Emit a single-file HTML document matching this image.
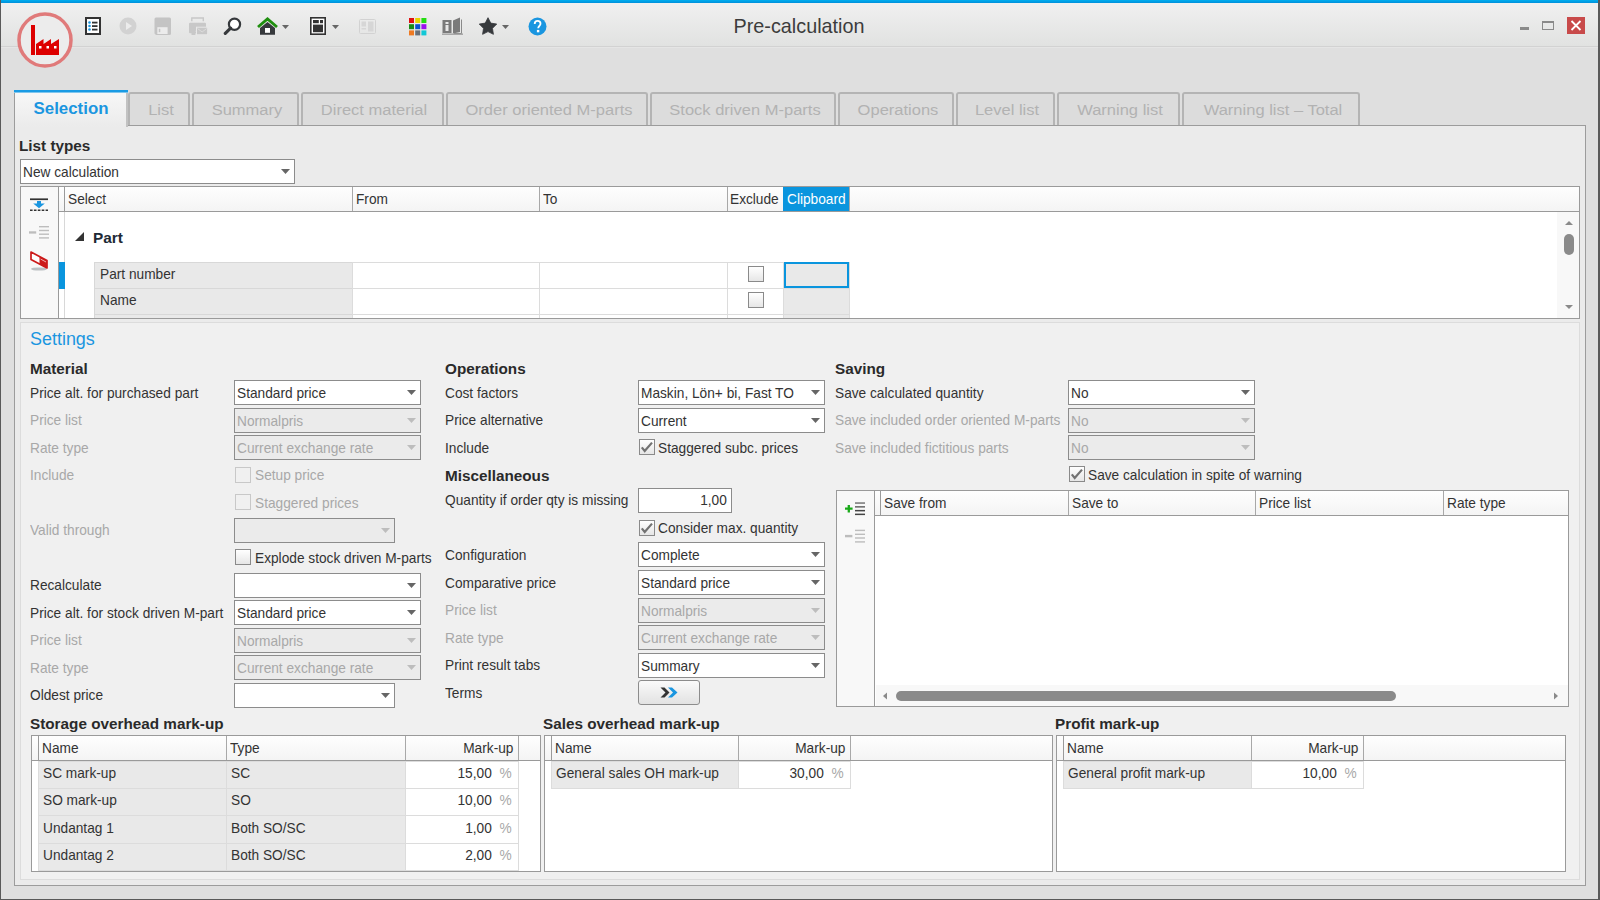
<!DOCTYPE html>
<html><head><meta charset="utf-8"><title>Pre-calculation</title>
<style>
html,body{margin:0;padding:0;width:1600px;height:900px;overflow:hidden;background:#dfdfdf}
body{position:relative;font-family:"Liberation Sans",sans-serif}
body>div{position:absolute}
.t{position:absolute;line-height:0;white-space:nowrap}
</style></head><body>
<div style="left:0;top:0;width:1600px;height:900px;background:#dfdfdf"></div>
<div style="left:0;top:3px;width:1600px;height:43px;background:linear-gradient(#f0f0f0,#e1e2e1)"></div>
<div style="left:0px;top:46px;width:1600px;height:1px;background:#d2d2d2"></div>
<div style="left:0px;top:47px;width:1600px;height:1px;background:#e5e5e5"></div>
<div style="left:0;top:0;width:1600px;height:3px;background:linear-gradient(#00aef0,#0090da)"></div>
<div style="left:0px;top:0px;width:1px;height:900px;background:#5a5a5a"></div>
<div style="left:1598px;top:0px;width:2px;height:900px;background:#5a5a5a"></div>
<div style="left:0px;top:899px;width:1600px;height:1px;background:#5a5a5a"></div>
<svg style="position:absolute;left:14px;top:10px" width="62" height="62" viewBox="0 0 62 62"><circle cx="31" cy="30" r="26" fill="#ececec" stroke="#e07a7a" stroke-width="3.5"/><rect x="17" y="15" width="4" height="30" fill="#dd0000"/><path d="M22 45V34L29.5 29V34L37 29V34L45 29V45Z" fill="#dd0000"/><rect x="25" y="36" width="2.5" height="2.5" fill="#fff"/><rect x="32.5" y="36" width="2.5" height="2.5" fill="#fff"/><rect x="40" y="36" width="2.5" height="2.5" fill="#fff"/></svg>
<svg style="position:absolute;left:85px;top:17px" width="16" height="18" viewBox="0 0 16 18"><rect x="1" y="1" width="14" height="16" fill="#fff" stroke="#333" stroke-width="2"/><circle cx="4.5" cy="5.5" r="1.3" fill="#1a96e0"/><circle cx="4.5" cy="9" r="1.3" fill="#1a96e0"/><circle cx="4.5" cy="12.5" r="1.3" fill="#1a96e0"/><rect x="7" y="4.7" width="5.5" height="1.8" fill="#333"/><rect x="7" y="8.2" width="5.5" height="1.8" fill="#333"/><rect x="7" y="11.7" width="5.5" height="1.8" fill="#333"/></svg>
<svg style="position:absolute;left:119px;top:17px" width="18" height="18" viewBox="0 0 18 18"><circle cx="9" cy="9" r="8.5" fill="#d2d2d2"/><path d="M7 5V13L13 9Z" fill="#ececec"/></svg>
<svg style="position:absolute;left:154px;top:17px" width="18" height="18" viewBox="0 0 18 18"><path d="M2 0.5H15.5A1.5 1.5 0 0 1 17 2V16.5A1.5 1.5 0 0 1 15.5 18H2L0.5 16.5V2A1.5 1.5 0 0 1 2 0.5Z" fill="#c4c4c4"/><rect x="3.3" y="10.2" width="10.3" height="6.8" fill="#ececec"/><rect x="4.8" y="11.8" width="1.5" height="3.4" fill="#c4c4c4"/></svg>
<svg style="position:absolute;left:189px;top:17px" width="19" height="18" viewBox="0 0 19 18"><path d="M2.8 4.3V1H14.3V4.3" stroke="#c8c8c8" stroke-width="1.4" fill="none"/><rect x="0" y="5.7" width="17" height="10.5" rx="1" fill="#c8c8c8"/><rect x="2.5" y="15" width="4" height="3" fill="#c8c8c8"/><rect x="6.6" y="16.8" width="0.9" height="0.9" fill="#e6e6e6"/><rect x="6.6" y="13.8" width="0.9" height="0.9" fill="#e6e6e6"/><rect x="7.5" y="10.2" width="11.2" height="7.6" fill="#c8c8c8" stroke="#e8e8e8" stroke-width="1"/><path d="M8.5 11.5L13.1 15L17.7 11.5" stroke="#dcdcdc" stroke-width="1" fill="none"/></svg>
<svg style="position:absolute;left:223px;top:16px" width="19" height="19" viewBox="0 0 19 19"><circle cx="11.5" cy="8.2" r="5.6" fill="#fff" stroke="#36393c" stroke-width="2.2"/><path d="M7.6 12.2L2.3 17.3" stroke="#36393c" stroke-width="3.2" stroke-linecap="round"/></svg>
<svg style="position:absolute;left:256px;top:16px" width="23" height="20" viewBox="0 0 23 20"><path d="M4 18.8V12L11.5 6L19 12V18.8Z" fill="#36393c"/><path d="M2 11L11.5 3L21 11" stroke="#1f8f0f" stroke-width="2.9" fill="none" stroke-linejoin="miter"/><rect x="9" y="12" width="5" height="4.8" fill="#fff"/></svg>
<svg style="position:absolute;left:282px;top:24.5px" width="7" height="4" viewBox="0 0 7 4"><path d="M0 0H7L3.5 4Z" fill="#666"/></svg>
<svg style="position:absolute;left:310px;top:17px" width="16" height="18" viewBox="0 0 16 18"><rect x="0.8" y="0.8" width="14.4" height="16.4" fill="#fff" stroke="#333" stroke-width="1.6"/><rect x="3" y="3" width="5.8" height="3.2" fill="#333"/><rect x="10" y="3" width="3" height="3.2" fill="#333"/><rect x="3" y="7.6" width="10" height="7.6" fill="#333"/></svg>
<svg style="position:absolute;left:332px;top:24.5px" width="7" height="4" viewBox="0 0 7 4"><path d="M0 0H7L3.5 4Z" fill="#666"/></svg>
<svg style="position:absolute;left:359px;top:19px" width="17" height="15" viewBox="0 0 17 15"><rect x="0.5" y="0.5" width="16" height="14" rx="1" fill="none" stroke="#d2d2d2"/><rect x="2.5" y="2.5" width="4.5" height="5" fill="#d6d6d6"/><rect x="9" y="2.5" width="5.5" height="10" fill="#d6d6d6"/><rect x="2.5" y="9" width="4.5" height="1.5" fill="#d6d6d6"/></svg>
<svg style="position:absolute;left:408.5px;top:17.5px" width="18" height="18" viewBox="0 0 18 18"><rect x="0.0" y="0.0" width="5" height="5" fill="#e01010"/><rect x="6.2" y="0.0" width="5" height="5" fill="#e6d400"/><rect x="12.4" y="0.0" width="5" height="5" fill="#22dd11"/><rect x="0.0" y="6.2" width="5" height="5" fill="#168a16"/><rect x="6.2" y="6.2" width="5" height="5" fill="#0a50d0"/><rect x="12.4" y="6.2" width="5" height="5" fill="#9a10ee"/><rect x="0.0" y="12.4" width="5" height="5" fill="#ee7a22"/><rect x="6.2" y="12.4" width="5" height="5" fill="#67707a"/><rect x="12.4" y="12.4" width="5" height="5" fill="#12c8d6"/></svg>
<svg style="position:absolute;left:442px;top:17px" width="22" height="18" viewBox="0 0 22 18"><rect x="0.5" y="3" width="9" height="13" fill="#7a7a7a"/><rect x="3.5" y="5" width="3" height="2" fill="#e8e8e8"/><rect x="3.5" y="8" width="3" height="6" fill="#e8e8e8"/><path d="M11 3.5L18 0.5V15L11 16.5Z" fill="#7a7a7a"/><path d="M19.5 2.5V16.5H12" stroke="#8a8a8a" stroke-width="1" fill="none"/><rect x="0" y="16.5" width="21" height="1.3" fill="#9a9a9a"/></svg>
<svg style="position:absolute;left:478.5px;top:16.5px" width="18" height="19" viewBox="0 0 18 19"><path d="M9.00 0.70L11.76 6.10L17.75 7.06L13.47 11.35L14.41 17.34L9.00 14.60L3.59 17.34L4.53 11.35L0.25 7.06L6.24 6.10Z" fill="#36393c" stroke="#36393c" stroke-width="0.8" stroke-linejoin="round"/></svg>
<svg style="position:absolute;left:502px;top:24.5px" width="7" height="4" viewBox="0 0 7 4"><path d="M0 0H7L3.5 4Z" fill="#666"/></svg>
<svg style="position:absolute;left:528px;top:17px" width="19" height="19" viewBox="0 0 19 19"><circle cx="9.5" cy="9.5" r="9" fill="#1a96e0"/><path d="M6.7 7C6.7 5.2 7.9 3.9 9.6 3.9C11.3 3.9 12.5 5.1 12.5 6.7C12.5 8.7 10.2 9 10.2 11.3" stroke="#fff" stroke-width="1.8" fill="none"/><rect x="8.9" y="12.9" width="2.4" height="2.4" fill="#fff"/></svg>
<div class="t" style="left:598.5px;width:400px;text-align:center;top:26.30px;font-size:20.2px;color:#3c3c3c;font-weight:normal;transform:scaleX(0.9800);transform-origin:50% 0;">Pre-calculation</div>
<div style="left:1520px;top:27px;width:9px;height:3px;background:#8a8a8a"></div>
<div style="left:1542px;top:21px;width:12px;height:9px;border:1px solid #8a8a8a;border-top-width:2px;box-sizing:border-box"></div>
<div style="left:1567px;top:17px;width:18px;height:17px;background:#c84a4a"></div>
<svg style="position:absolute;left:1567px;top:17px" width="18" height="17" viewBox="0 0 18 17"><path d="M4.5 4L13.5 13M13.5 4L4.5 13" stroke="#fff" stroke-width="1.8"/></svg>
<div style="left:128px;top:92px;width:62px;height:34px;background:#dcdcdc;border:2px solid #b4b4b4;border-bottom:none;box-sizing:border-box;border-radius:3px 3px 0 0"></div>
<div class="t" style="left:-39.30000000000001px;width:400px;text-align:center;top:110.33px;font-size:15.2px;color:#b2b2b2;font-weight:normal;transform:scaleX(1.0870);transform-origin:50% 0;">List</div>
<div style="left:192px;top:92px;width:107px;height:34px;background:#dcdcdc;border:2px solid #b4b4b4;border-bottom:none;box-sizing:border-box;border-radius:3px 3px 0 0"></div>
<div class="t" style="left:47.19999999999999px;width:400px;text-align:center;top:110.33px;font-size:15.2px;color:#b2b2b2;font-weight:normal;transform:scaleX(1.0870);transform-origin:50% 0;">Summary</div>
<div style="left:301px;top:92px;width:143px;height:34px;background:#dcdcdc;border:2px solid #b4b4b4;border-bottom:none;box-sizing:border-box;border-radius:3px 3px 0 0"></div>
<div class="t" style="left:174.2px;width:400px;text-align:center;top:110.33px;font-size:15.2px;color:#b2b2b2;font-weight:normal;transform:scaleX(1.0870);transform-origin:50% 0;">Direct material</div>
<div style="left:446px;top:92px;width:202px;height:34px;background:#dcdcdc;border:2px solid #b4b4b4;border-bottom:none;box-sizing:border-box;border-radius:3px 3px 0 0"></div>
<div class="t" style="left:348.70000000000005px;width:400px;text-align:center;top:110.33px;font-size:15.2px;color:#b2b2b2;font-weight:normal;transform:scaleX(1.0870);transform-origin:50% 0;">Order oriented M-parts</div>
<div style="left:650px;top:92px;width:186px;height:34px;background:#dcdcdc;border:2px solid #b4b4b4;border-bottom:none;box-sizing:border-box;border-radius:3px 3px 0 0"></div>
<div class="t" style="left:544.7px;width:400px;text-align:center;top:110.33px;font-size:15.2px;color:#b2b2b2;font-weight:normal;transform:scaleX(1.0870);transform-origin:50% 0;">Stock driven M-parts</div>
<div style="left:838px;top:92px;width:116px;height:34px;background:#dcdcdc;border:2px solid #b4b4b4;border-bottom:none;box-sizing:border-box;border-radius:3px 3px 0 0"></div>
<div class="t" style="left:697.7px;width:400px;text-align:center;top:110.33px;font-size:15.2px;color:#b2b2b2;font-weight:normal;transform:scaleX(1.0870);transform-origin:50% 0;">Operations</div>
<div style="left:956px;top:92px;width:99px;height:34px;background:#dcdcdc;border:2px solid #b4b4b4;border-bottom:none;box-sizing:border-box;border-radius:3px 3px 0 0"></div>
<div class="t" style="left:807.2px;width:400px;text-align:center;top:110.33px;font-size:15.2px;color:#b2b2b2;font-weight:normal;transform:scaleX(1.0870);transform-origin:50% 0;">Level list</div>
<div style="left:1057px;top:92px;width:123px;height:34px;background:#dcdcdc;border:2px solid #b4b4b4;border-bottom:none;box-sizing:border-box;border-radius:3px 3px 0 0"></div>
<div class="t" style="left:920.2px;width:400px;text-align:center;top:110.33px;font-size:15.2px;color:#b2b2b2;font-weight:normal;transform:scaleX(1.0870);transform-origin:50% 0;">Warning list</div>
<div style="left:1182px;top:92px;width:178px;height:34px;background:#dcdcdc;border:2px solid #b4b4b4;border-bottom:none;box-sizing:border-box;border-radius:3px 3px 0 0"></div>
<div class="t" style="left:1072.7px;width:400px;text-align:center;top:110.33px;font-size:15.2px;color:#b2b2b2;font-weight:normal;transform:scaleX(1.0870);transform-origin:50% 0;">Warning list – Total</div>
<div style="left:14px;top:125px;width:1572px;height:761px;background:#ebebeb;border:1px solid #9c9c9c;box-sizing:border-box"></div>
<div style="left:14px;top:90px;width:114px;height:37px;background:linear-gradient(#f8f8f8,#ebebeb);border-left:1px solid #9c9c9c;border-right:2px solid #c2c2c2;box-sizing:border-box"></div>
<div style="left:14px;top:90px;width:114px;height:2px;background:#1a9be4"></div>
<div style="left:14px;top:92px;width:114px;height:1px;background:#7fc6ee"></div>
<div class="t" style="left:-129px;width:400px;text-align:center;top:109.36px;font-size:15.7px;color:#1a96e0;font-weight:bold;transform:scaleX(1.0750);transform-origin:50% 0;">Selection</div>
<div class="t" style="left:19.2px;top:146.48px;font-size:13.9px;color:#2a2a2a;font-weight:bold;transform:scaleX(1.1000);transform-origin:0 0;">List types</div>
<div style="left:20px;top:159px;width:275px;height:25px;border:1px solid #8c8c8c;box-sizing:border-box;background:#fff"></div>
<div class="t" style="left:23.2px;top:171.55px;font-size:14.3px;color:#333;font-weight:normal;transform:scaleX(0.9580);transform-origin:0 0;">New calculation</div>
<svg style="position:absolute;left:281px;top:169px" width="9" height="5" viewBox="0 0 9 5"><path d="M0 0H9L4.5 5Z" fill="#666"/></svg>
<div style="left:20px;top:186px;width:1560px;height:133px;background:#fff;border:1px solid #9a9a9a;box-sizing:border-box"></div>
<div style="left:21px;top:187px;width:38px;height:131px;background:#f8f8f8;border-right:1px solid #9a9a9a;box-sizing:border-box"></div>
<div style="left:59px;top:187px;width:1520px;height:25px;background:linear-gradient(#fefefe,#f4f4f4);border-bottom:1px solid #9a9a9a;box-sizing:border-box"></div>
<div style="left:64px;top:187px;width:1px;height:25px;background:#9a9a9a"></div>
<div style="left:64px;top:212px;width:1px;height:106px;background:#d8d8d8"></div>
<div style="left:352px;top:187px;width:1px;height:24px;background:#a8a8a8"></div>
<div style="left:539px;top:187px;width:1px;height:24px;background:#a8a8a8"></div>
<div style="left:727px;top:187px;width:1px;height:24px;background:#a8a8a8"></div>
<div style="left:849px;top:187px;width:1px;height:24px;background:#a8a8a8"></div>
<div style="left:783px;top:187px;width:66px;height:24px;background:#0a95de"></div>
<div class="t" style="left:68.2px;top:198.85px;font-size:14.3px;color:#333;font-weight:normal;transform:scaleX(0.9580);transform-origin:0 0;">Select</div>
<div class="t" style="left:355.7px;top:198.85px;font-size:14.3px;color:#333;font-weight:normal;transform:scaleX(0.9580);transform-origin:0 0;">From</div>
<div class="t" style="left:543.2px;top:198.85px;font-size:14.3px;color:#333;font-weight:normal;transform:scaleX(0.9580);transform-origin:0 0;">To</div>
<div class="t" style="left:730.2px;top:198.85px;font-size:14.3px;color:#333;font-weight:normal;transform:scaleX(0.9580);transform-origin:0 0;">Exclude</div>
<div class="t" style="left:787.2px;top:198.85px;font-size:14.3px;color:#fff;font-weight:normal;transform:scaleX(0.9580);transform-origin:0 0;">Clipboard</div>
<svg style="position:absolute;left:29px;top:198px" width="20" height="14" viewBox="0 0 20 14"><rect x="1" y="0.4" width="18" height="1.7" fill="#333"/><path d="M8 3H12V5.5H15.8L10 10.3L4.2 5.5H8Z" fill="#1a96e0"/><path d="M1 12.3H19" stroke="#333" stroke-width="1.6" stroke-dasharray="2.6 1.3"/></svg>
<svg style="position:absolute;left:28px;top:225px" width="22" height="15" viewBox="0 0 22 15"><rect x="1" y="6.3" width="7.2" height="2.3" fill="#bdbdbd"/><rect x="11" y="1" width="10" height="1.4" fill="#bdbdbd"/><rect x="11" y="4.8" width="10" height="1.4" fill="#bdbdbd"/><rect x="11" y="8.5" width="10" height="1.4" fill="#bdbdbd"/><rect x="11" y="12.2" width="10" height="1.4" fill="#bdbdbd"/></svg>
<svg style="position:absolute;left:28px;top:249px" width="22" height="23" viewBox="0 0 22 23"><ellipse cx="11" cy="20" rx="8" ry="1.6" fill="#8a9298" opacity="0.55"/><path d="M3 3L19 11.5V19L3 10.5Z" fill="#fff" stroke="#cc1a1a" stroke-width="1.7" stroke-linejoin="round"/><path d="M11.5 7.5L19 11.5V19L11.5 15Z" fill="#cc1a1a"/><path d="M12.5 10L18 13" stroke="#f0b0b0" stroke-width="1"/></svg>
<svg style="position:absolute;left:75px;top:232px" width="9" height="9" viewBox="0 0 9 9"><path d="M9 0V9H0Z" fill="#333"/></svg>
<div class="t" style="left:92.7px;top:237.75px;font-size:14px;color:#1e2a36;font-weight:bold;transform:scaleX(1.1000);transform-origin:0 0;">Part</div>
<div style="left:59px;top:262px;width:6px;height:27px;background:#0a95de"></div>
<div style="left:94px;top:262px;width:259px;height:27px;background:#e9e9e9;border:1px solid #d8d8d8;border-right:none;box-sizing:border-box"></div>
<div style="left:352px;top:262px;width:188px;height:27px;background:#fff;border:1px solid #dcdcdc;border-right:none;box-sizing:border-box"></div>
<div style="left:539px;top:262px;width:189px;height:27px;background:#fff;border:1px solid #dcdcdc;border-right:none;box-sizing:border-box"></div>
<div style="left:727px;top:262px;width:57px;height:27px;background:#fff;border:1px solid #dcdcdc;border-right:none;box-sizing:border-box"></div>
<div style="left:783px;top:262px;width:67px;height:27px;background:#e9e9e9;border:1px solid #dcdcdc;box-sizing:border-box"></div>
<div class="t" style="left:99.7px;top:273.85px;font-size:14.3px;color:#333;font-weight:normal;transform:scaleX(0.9580);transform-origin:0 0;">Part number</div>
<div style="left:748px;top:266px;width:16px;height:16px;border:1px solid #8a8a8a;box-sizing:border-box;background:linear-gradient(#fff,#e6e6e6)"></div>
<div style="left:94px;top:288px;width:259px;height:27px;background:#e9e9e9;border:1px solid #d8d8d8;border-right:none;box-sizing:border-box"></div>
<div style="left:352px;top:288px;width:188px;height:27px;background:#fff;border:1px solid #dcdcdc;border-right:none;box-sizing:border-box"></div>
<div style="left:539px;top:288px;width:189px;height:27px;background:#fff;border:1px solid #dcdcdc;border-right:none;box-sizing:border-box"></div>
<div style="left:727px;top:288px;width:57px;height:27px;background:#fff;border:1px solid #dcdcdc;border-right:none;box-sizing:border-box"></div>
<div style="left:783px;top:288px;width:67px;height:27px;background:#e9e9e9;border:1px solid #dcdcdc;box-sizing:border-box"></div>
<div class="t" style="left:99.7px;top:299.85px;font-size:14.3px;color:#333;font-weight:normal;transform:scaleX(0.9580);transform-origin:0 0;">Name</div>
<div style="left:748px;top:292px;width:16px;height:16px;border:1px solid #8a8a8a;box-sizing:border-box;background:linear-gradient(#fff,#e6e6e6)"></div>
<div style="left:94px;top:314px;width:259px;height:5px;background:#e9e9e9;border:1px solid #d8d8d8;border-right:none;box-sizing:border-box"></div>
<div style="left:352px;top:314px;width:188px;height:5px;background:#fff;border:1px solid #dcdcdc;border-right:none;box-sizing:border-box"></div>
<div style="left:539px;top:314px;width:189px;height:5px;background:#fff;border:1px solid #dcdcdc;border-right:none;box-sizing:border-box"></div>
<div style="left:727px;top:314px;width:57px;height:5px;background:#fff;border:1px solid #dcdcdc;border-right:none;box-sizing:border-box"></div>
<div style="left:783px;top:314px;width:67px;height:5px;background:#e9e9e9;border:1px solid #dcdcdc;box-sizing:border-box"></div>
<div style="left:784px;top:262px;width:65px;height:26px;border:2px solid #0a95de;box-sizing:border-box"></div>
<div style="left:20px;top:318px;width:1560px;height:1px;background:#9a9a9a"></div>
<div style="left:1557px;top:212px;width:22px;height:106px;background:#f8f8f8"></div>
<svg style="position:absolute;left:1564px;top:220px" width="10" height="6" viewBox="0 0 10 6"><path d="M1 5H9L5 1Z" fill="#8a8a8a"/></svg>
<div style="left:1564px;top:234px;width:10px;height:21px;background:#8a8a8a;border-radius:5px"></div>
<svg style="position:absolute;left:1564px;top:304px" width="10" height="6" viewBox="0 0 10 6"><path d="M1 1H9L5 5Z" fill="#8a8a8a"/></svg>
<div style="left:20px;top:322px;width:1560px;height:558px;background:#f0f0f0;border:1px solid #dcdcdc;box-sizing:border-box"></div>
<div class="t" style="left:29.7px;top:338.52px;font-size:18.7px;color:#1a96e0;font-weight:normal;transform:scaleX(0.9600);transform-origin:0 0;">Settings</div>
<div class="t" style="left:30.2px;top:368.98px;font-size:13.9px;color:#2a2a2a;font-weight:bold;transform:scaleX(1.1000);transform-origin:0 0;">Material</div>
<div class="t" style="left:30.2px;top:393.05px;font-size:14.3px;color:#333;font-weight:normal;transform:scaleX(0.9580);transform-origin:0 0;">Price alt. for purchased part</div>
<div style="left:234px;top:380px;width:187px;height:25px;border:1px solid #8c8c8c;box-sizing:border-box;background:#fff"></div>
<div class="t" style="left:237.2px;top:392.55px;font-size:14.3px;color:#333;font-weight:normal;transform:scaleX(0.9580);transform-origin:0 0;">Standard price</div>
<svg style="position:absolute;left:407px;top:390px" width="9" height="5" viewBox="0 0 9 5"><path d="M0 0H9L4.5 5Z" fill="#666"/></svg>
<div class="t" style="left:30.2px;top:420.05px;font-size:14.3px;color:#a8a8a8;font-weight:normal;transform:scaleX(0.9580);transform-origin:0 0;">Price list</div>
<div style="left:234px;top:408px;width:187px;height:25px;border:1px solid #8c8c8c;box-sizing:border-box;background:#ebebeb"></div>
<div class="t" style="left:237.2px;top:420.55px;font-size:14.3px;color:#a8a8a8;font-weight:normal;transform:scaleX(0.9580);transform-origin:0 0;">Normalpris</div>
<svg style="position:absolute;left:407px;top:418px" width="9" height="5" viewBox="0 0 9 5"><path d="M0 0H9L4.5 5Z" fill="#bdbdbd"/></svg>
<div class="t" style="left:30.2px;top:448.05px;font-size:14.3px;color:#a8a8a8;font-weight:normal;transform:scaleX(0.9580);transform-origin:0 0;">Rate type</div>
<div style="left:234px;top:435px;width:187px;height:25px;border:1px solid #8c8c8c;box-sizing:border-box;background:#ebebeb"></div>
<div class="t" style="left:237.2px;top:447.55px;font-size:14.3px;color:#a8a8a8;font-weight:normal;transform:scaleX(0.9580);transform-origin:0 0;">Current exchange rate</div>
<svg style="position:absolute;left:407px;top:445px" width="9" height="5" viewBox="0 0 9 5"><path d="M0 0H9L4.5 5Z" fill="#bdbdbd"/></svg>
<div class="t" style="left:30.2px;top:475.05px;font-size:14.3px;color:#a8a8a8;font-weight:normal;transform:scaleX(0.9580);transform-origin:0 0;">Include</div>
<div style="left:235px;top:467px;width:16px;height:16px;border:1px solid #c8c8c8;box-sizing:border-box;background:transparent"></div>
<div class="t" style="left:254.7px;top:475.05px;font-size:14.3px;color:#a8a8a8;font-weight:normal;transform:scaleX(0.9580);transform-origin:0 0;">Setup price</div>
<div style="left:235px;top:494px;width:16px;height:16px;border:1px solid #c8c8c8;box-sizing:border-box;background:transparent"></div>
<div class="t" style="left:254.7px;top:503.05px;font-size:14.3px;color:#a8a8a8;font-weight:normal;transform:scaleX(0.9580);transform-origin:0 0;">Staggered prices</div>
<div class="t" style="left:30.2px;top:530.05px;font-size:14.3px;color:#a8a8a8;font-weight:normal;transform:scaleX(0.9580);transform-origin:0 0;">Valid through</div>
<div style="left:234px;top:518px;width:161px;height:25px;border:1px solid #8c8c8c;box-sizing:border-box;background:#ebebeb"></div>
<svg style="position:absolute;left:381px;top:528px" width="9" height="5" viewBox="0 0 9 5"><path d="M0 0H9L4.5 5Z" fill="#bdbdbd"/></svg>
<div style="left:235px;top:549px;width:16px;height:16px;border:1px solid #8a8a8a;box-sizing:border-box;background:linear-gradient(#fff,#e6e6e6)"></div>
<div class="t" style="left:254.7px;top:558.05px;font-size:14.3px;color:#333;font-weight:normal;transform:scaleX(0.9580);transform-origin:0 0;">Explode stock driven M-parts</div>
<div class="t" style="left:30.2px;top:585.05px;font-size:14.3px;color:#333;font-weight:normal;transform:scaleX(0.9580);transform-origin:0 0;">Recalculate</div>
<div style="left:234px;top:573px;width:187px;height:25px;border:1px solid #8c8c8c;box-sizing:border-box;background:#fff"></div>
<svg style="position:absolute;left:407px;top:583px" width="9" height="5" viewBox="0 0 9 5"><path d="M0 0H9L4.5 5Z" fill="#666"/></svg>
<div class="t" style="left:30.2px;top:613.05px;font-size:14.3px;color:#333;font-weight:normal;transform:scaleX(0.9580);transform-origin:0 0;">Price alt. for stock driven M-part</div>
<div style="left:234px;top:600px;width:187px;height:25px;border:1px solid #8c8c8c;box-sizing:border-box;background:#fff"></div>
<div class="t" style="left:237.2px;top:612.55px;font-size:14.3px;color:#333;font-weight:normal;transform:scaleX(0.9580);transform-origin:0 0;">Standard price</div>
<svg style="position:absolute;left:407px;top:610px" width="9" height="5" viewBox="0 0 9 5"><path d="M0 0H9L4.5 5Z" fill="#666"/></svg>
<div class="t" style="left:30.2px;top:640.05px;font-size:14.3px;color:#a8a8a8;font-weight:normal;transform:scaleX(0.9580);transform-origin:0 0;">Price list</div>
<div style="left:234px;top:628px;width:187px;height:25px;border:1px solid #8c8c8c;box-sizing:border-box;background:#ebebeb"></div>
<div class="t" style="left:237.2px;top:640.55px;font-size:14.3px;color:#a8a8a8;font-weight:normal;transform:scaleX(0.9580);transform-origin:0 0;">Normalpris</div>
<svg style="position:absolute;left:407px;top:638px" width="9" height="5" viewBox="0 0 9 5"><path d="M0 0H9L4.5 5Z" fill="#bdbdbd"/></svg>
<div class="t" style="left:30.2px;top:668.05px;font-size:14.3px;color:#a8a8a8;font-weight:normal;transform:scaleX(0.9580);transform-origin:0 0;">Rate type</div>
<div style="left:234px;top:655px;width:187px;height:25px;border:1px solid #8c8c8c;box-sizing:border-box;background:#ebebeb"></div>
<div class="t" style="left:237.2px;top:667.55px;font-size:14.3px;color:#a8a8a8;font-weight:normal;transform:scaleX(0.9580);transform-origin:0 0;">Current exchange rate</div>
<svg style="position:absolute;left:407px;top:665px" width="9" height="5" viewBox="0 0 9 5"><path d="M0 0H9L4.5 5Z" fill="#bdbdbd"/></svg>
<div class="t" style="left:30.2px;top:695.05px;font-size:14.3px;color:#333;font-weight:normal;transform:scaleX(0.9580);transform-origin:0 0;">Oldest price</div>
<div style="left:234px;top:683px;width:161px;height:25px;border:1px solid #8c8c8c;box-sizing:border-box;background:#fff"></div>
<svg style="position:absolute;left:381px;top:693px" width="9" height="5" viewBox="0 0 9 5"><path d="M0 0H9L4.5 5Z" fill="#666"/></svg>
<div class="t" style="left:445.2px;top:368.98px;font-size:13.9px;color:#2a2a2a;font-weight:bold;transform:scaleX(1.1000);transform-origin:0 0;">Operations</div>
<div class="t" style="left:445.2px;top:392.85px;font-size:14.3px;color:#333;font-weight:normal;transform:scaleX(0.9580);transform-origin:0 0;">Cost factors</div>
<div style="left:638px;top:380px;width:187px;height:25px;border:1px solid #8c8c8c;box-sizing:border-box;background:#fff"></div>
<div class="t" style="left:641.2px;top:392.55px;font-size:14.3px;color:#333;font-weight:normal;transform:scaleX(0.9580);transform-origin:0 0;">Maskin, Lön+ bi, Fast TO</div>
<svg style="position:absolute;left:811px;top:390px" width="9" height="5" viewBox="0 0 9 5"><path d="M0 0H9L4.5 5Z" fill="#666"/></svg>
<div class="t" style="left:445.2px;top:420.35px;font-size:14.3px;color:#333;font-weight:normal;transform:scaleX(0.9580);transform-origin:0 0;">Price alternative</div>
<div style="left:638px;top:408px;width:187px;height:25px;border:1px solid #8c8c8c;box-sizing:border-box;background:#fff"></div>
<div class="t" style="left:641.2px;top:420.55px;font-size:14.3px;color:#333;font-weight:normal;transform:scaleX(0.9580);transform-origin:0 0;">Current</div>
<svg style="position:absolute;left:811px;top:418px" width="9" height="5" viewBox="0 0 9 5"><path d="M0 0H9L4.5 5Z" fill="#666"/></svg>
<div class="t" style="left:445.2px;top:447.65px;font-size:14.3px;color:#333;font-weight:normal;transform:scaleX(0.9580);transform-origin:0 0;">Include</div>
<div style="left:639px;top:439px;width:16px;height:16px;border:1px solid #8a8a8a;box-sizing:border-box;background:linear-gradient(#fff,#e6e6e6)"></div>
<svg style="position:absolute;left:639px;top:439px" width="16" height="16" viewBox="0 0 16 16"><path d="M2.8 8.4L5.7 12L13 3.6" stroke="#727272" stroke-width="2.2" fill="none"/></svg>
<div class="t" style="left:658.2px;top:447.65px;font-size:14.3px;color:#333;font-weight:normal;transform:scaleX(0.9580);transform-origin:0 0;">Staggered subc. prices</div>
<div class="t" style="left:445.2px;top:476.48px;font-size:13.9px;color:#2a2a2a;font-weight:bold;transform:scaleX(1.1000);transform-origin:0 0;">Miscellaneous</div>
<div class="t" style="left:445.2px;top:500.45px;font-size:14.3px;color:#333;font-weight:normal;transform:scaleX(0.9580);transform-origin:0 0;">Quantity if order qty is missing</div>
<div style="left:638px;top:488px;width:94px;height:25px;border:1px solid #8c8c8c;box-sizing:border-box;background:#fff"></div>
<div class="t" style="right:873px;top:500.45px;font-size:14.3px;color:#333;font-weight:normal;transform:scaleX(0.9580);transform-origin:100% 0;">1,00</div>
<div style="left:639px;top:519.5px;width:16px;height:16px;border:1px solid #8a8a8a;box-sizing:border-box;background:linear-gradient(#fff,#e6e6e6)"></div>
<svg style="position:absolute;left:639px;top:519.5px" width="16" height="16" viewBox="0 0 16 16"><path d="M2.8 8.4L5.7 12L13 3.6" stroke="#727272" stroke-width="2.2" fill="none"/></svg>
<div class="t" style="left:658.2px;top:528.05px;font-size:14.3px;color:#333;font-weight:normal;transform:scaleX(0.9580);transform-origin:0 0;">Consider max. quantity</div>
<div class="t" style="left:445.2px;top:555.05px;font-size:14.3px;color:#333;font-weight:normal;transform:scaleX(0.9580);transform-origin:0 0;">Configuration</div>
<div style="left:638px;top:542px;width:187px;height:25px;border:1px solid #8c8c8c;box-sizing:border-box;background:#fff"></div>
<div class="t" style="left:641.2px;top:554.55px;font-size:14.3px;color:#333;font-weight:normal;transform:scaleX(0.9580);transform-origin:0 0;">Complete</div>
<svg style="position:absolute;left:811px;top:552px" width="9" height="5" viewBox="0 0 9 5"><path d="M0 0H9L4.5 5Z" fill="#666"/></svg>
<div class="t" style="left:445.2px;top:583.05px;font-size:14.3px;color:#333;font-weight:normal;transform:scaleX(0.9580);transform-origin:0 0;">Comparative price</div>
<div style="left:638px;top:570px;width:187px;height:25px;border:1px solid #8c8c8c;box-sizing:border-box;background:#fff"></div>
<div class="t" style="left:641.2px;top:582.55px;font-size:14.3px;color:#333;font-weight:normal;transform:scaleX(0.9580);transform-origin:0 0;">Standard price</div>
<svg style="position:absolute;left:811px;top:580px" width="9" height="5" viewBox="0 0 9 5"><path d="M0 0H9L4.5 5Z" fill="#666"/></svg>
<div class="t" style="left:445.2px;top:610.05px;font-size:14.3px;color:#a8a8a8;font-weight:normal;transform:scaleX(0.9580);transform-origin:0 0;">Price list</div>
<div style="left:638px;top:598px;width:187px;height:25px;border:1px solid #8c8c8c;box-sizing:border-box;background:#ebebeb"></div>
<div class="t" style="left:641.2px;top:610.55px;font-size:14.3px;color:#a8a8a8;font-weight:normal;transform:scaleX(0.9580);transform-origin:0 0;">Normalpris</div>
<svg style="position:absolute;left:811px;top:608px" width="9" height="5" viewBox="0 0 9 5"><path d="M0 0H9L4.5 5Z" fill="#bdbdbd"/></svg>
<div class="t" style="left:445.2px;top:638.05px;font-size:14.3px;color:#a8a8a8;font-weight:normal;transform:scaleX(0.9580);transform-origin:0 0;">Rate type</div>
<div style="left:638px;top:625px;width:187px;height:25px;border:1px solid #8c8c8c;box-sizing:border-box;background:#ebebeb"></div>
<div class="t" style="left:641.2px;top:637.55px;font-size:14.3px;color:#a8a8a8;font-weight:normal;transform:scaleX(0.9580);transform-origin:0 0;">Current exchange rate</div>
<svg style="position:absolute;left:811px;top:635px" width="9" height="5" viewBox="0 0 9 5"><path d="M0 0H9L4.5 5Z" fill="#bdbdbd"/></svg>
<div class="t" style="left:445.2px;top:665.05px;font-size:14.3px;color:#333;font-weight:normal;transform:scaleX(0.9580);transform-origin:0 0;">Print result tabs</div>
<div style="left:638px;top:653px;width:187px;height:25px;border:1px solid #8c8c8c;box-sizing:border-box;background:#fff"></div>
<div class="t" style="left:641.2px;top:665.55px;font-size:14.3px;color:#333;font-weight:normal;transform:scaleX(0.9580);transform-origin:0 0;">Summary</div>
<svg style="position:absolute;left:811px;top:663px" width="9" height="5" viewBox="0 0 9 5"><path d="M0 0H9L4.5 5Z" fill="#666"/></svg>
<div class="t" style="left:445.2px;top:693.05px;font-size:14.3px;color:#333;font-weight:normal;transform:scaleX(0.9580);transform-origin:0 0;">Terms</div>
<div style="left:638px;top:680px;width:62px;height:25px;border:1px solid #8c8c8c;box-sizing:border-box;border-radius:3px;background:linear-gradient(#fafafa,#e2e2e2)"></div>
<svg style="position:absolute;left:660px;top:687px" width="19" height="11" viewBox="0 0 19 11"><path d="M0.5 0.5H4.5L9.5 5.5L4.5 10.5H0.5L5.5 5.5Z" fill="#333"/><path d="M8 0.5H12L17.5 5.5L12 10.5H8L13 5.5Z" fill="#1a96e0"/></svg>
<div class="t" style="left:835.2px;top:368.98px;font-size:13.9px;color:#2a2a2a;font-weight:bold;transform:scaleX(1.1000);transform-origin:0 0;">Saving</div>
<div class="t" style="left:835.2px;top:392.85px;font-size:14.3px;color:#333;font-weight:normal;transform:scaleX(0.9580);transform-origin:0 0;">Save calculated quantity</div>
<div style="left:1068px;top:380px;width:187px;height:25px;border:1px solid #8c8c8c;box-sizing:border-box;background:#fff"></div>
<div class="t" style="left:1071.2px;top:392.55px;font-size:14.3px;color:#333;font-weight:normal;transform:scaleX(0.9580);transform-origin:0 0;">No</div>
<svg style="position:absolute;left:1241px;top:390px" width="9" height="5" viewBox="0 0 9 5"><path d="M0 0H9L4.5 5Z" fill="#666"/></svg>
<div class="t" style="left:835.2px;top:420.35px;font-size:14.3px;color:#a8a8a8;font-weight:normal;transform:scaleX(0.9580);transform-origin:0 0;">Save included order oriented M-parts</div>
<div style="left:1068px;top:408px;width:187px;height:25px;border:1px solid #8c8c8c;box-sizing:border-box;background:#ebebeb"></div>
<div class="t" style="left:1071.2px;top:420.55px;font-size:14.3px;color:#a8a8a8;font-weight:normal;transform:scaleX(0.9580);transform-origin:0 0;">No</div>
<svg style="position:absolute;left:1241px;top:418px" width="9" height="5" viewBox="0 0 9 5"><path d="M0 0H9L4.5 5Z" fill="#bdbdbd"/></svg>
<div class="t" style="left:835.2px;top:447.85px;font-size:14.3px;color:#a8a8a8;font-weight:normal;transform:scaleX(0.9580);transform-origin:0 0;">Save included fictitious parts</div>
<div style="left:1068px;top:435px;width:187px;height:25px;border:1px solid #8c8c8c;box-sizing:border-box;background:#ebebeb"></div>
<div class="t" style="left:1071.2px;top:447.55px;font-size:14.3px;color:#a8a8a8;font-weight:normal;transform:scaleX(0.9580);transform-origin:0 0;">No</div>
<svg style="position:absolute;left:1241px;top:445px" width="9" height="5" viewBox="0 0 9 5"><path d="M0 0H9L4.5 5Z" fill="#bdbdbd"/></svg>
<div style="left:1069px;top:466px;width:16px;height:16px;border:1px solid #8a8a8a;box-sizing:border-box;background:linear-gradient(#fff,#e6e6e6)"></div>
<svg style="position:absolute;left:1069px;top:466px" width="16" height="16" viewBox="0 0 16 16"><path d="M2.8 8.4L5.7 12L13 3.6" stroke="#727272" stroke-width="2.2" fill="none"/></svg>
<div class="t" style="left:1088.2px;top:475.35px;font-size:14.3px;color:#333;font-weight:normal;transform:scaleX(0.9580);transform-origin:0 0;">Save calculation in spite of warning</div>
<div style="left:836px;top:490px;width:733px;height:217px;background:#fff;border:1px solid #9a9a9a;box-sizing:border-box"></div>
<div style="left:837px;top:491px;width:38px;height:215px;background:#f8f8f8;border-right:1px solid #9a9a9a;box-sizing:border-box"></div>
<div style="left:875px;top:491px;width:693px;height:25px;background:linear-gradient(#fefefe,#f4f4f4);border-bottom:1px solid #9a9a9a;box-sizing:border-box"></div>
<div style="left:880px;top:491px;width:1px;height:24px;background:#9a9a9a"></div>
<div style="left:1068px;top:491px;width:1px;height:24px;background:#a8a8a8"></div>
<div style="left:1255px;top:491px;width:1px;height:24px;background:#a8a8a8"></div>
<div style="left:1443px;top:491px;width:1px;height:24px;background:#a8a8a8"></div>
<div class="t" style="left:884.2px;top:502.85px;font-size:14.3px;color:#333;font-weight:normal;transform:scaleX(0.9580);transform-origin:0 0;">Save from</div>
<div class="t" style="left:1071.7px;top:502.85px;font-size:14.3px;color:#333;font-weight:normal;transform:scaleX(0.9580);transform-origin:0 0;">Save to</div>
<div class="t" style="left:1259.2px;top:502.85px;font-size:14.3px;color:#333;font-weight:normal;transform:scaleX(0.9580);transform-origin:0 0;">Price list</div>
<div class="t" style="left:1446.7px;top:502.85px;font-size:14.3px;color:#333;font-weight:normal;transform:scaleX(0.9580);transform-origin:0 0;">Rate type</div>
<svg style="position:absolute;left:843px;top:500px" width="24" height="17" viewBox="0 0 24 17"><path d="M5.8 4.9V12.5M2 8.7H9.6" stroke="#1aaa1a" stroke-width="2.3"/><rect x="12" y="2.3" width="10" height="1.5" fill="#777"/><rect x="12" y="6.1" width="10" height="1.5" fill="#666"/><rect x="12" y="9.9" width="10" height="1.5" fill="#444"/><rect x="12" y="13.6" width="10" height="1.5" fill="#444"/></svg>
<svg style="position:absolute;left:843px;top:528px" width="24" height="16" viewBox="0 0 24 16"><rect x="2" y="6.9" width="7.4" height="2.4" fill="#bdbdbd"/><rect x="12" y="1.7" width="10" height="1.4" fill="#bdbdbd"/><rect x="12" y="5.6" width="10" height="1.4" fill="#bdbdbd"/><rect x="12" y="9.3" width="10" height="1.4" fill="#bdbdbd"/><rect x="12" y="13.2" width="10" height="1.4" fill="#bdbdbd"/></svg>
<div style="left:876px;top:685px;width:692px;height:21px;background:#f8f8f8"></div>
<svg style="position:absolute;left:882px;top:692px" width="6" height="8" viewBox="0 0 6 8"><path d="M5 0.5V7.5L1 4Z" fill="#8a8a8a"/></svg>
<div style="left:896px;top:691px;width:500px;height:10px;background:#8a8a8a;border-radius:5px"></div>
<svg style="position:absolute;left:1553px;top:692px" width="6" height="8" viewBox="0 0 6 8"><path d="M1 0.5V7.5L5 4Z" fill="#8a8a8a"/></svg>
<div class="t" style="left:30.2px;top:723.68px;font-size:13.9px;color:#2a2a2a;font-weight:bold;transform:scaleX(1.1000);transform-origin:0 0;">Storage overhead mark-up</div>
<div style="left:31px;top:735px;width:510px;height:137px;background:#fff;border:1px solid #9a9a9a;box-sizing:border-box"></div>
<div style="left:32px;top:736px;width:508px;height:25px;background:linear-gradient(#fefefe,#f4f4f4);border-bottom:1px solid #9a9a9a;box-sizing:border-box"></div>
<div style="left:38px;top:736px;width:1px;height:25px;background:#9a9a9a"></div>
<div style="left:226px;top:736px;width:1px;height:24px;background:#a8a8a8"></div>
<div class="t" style="left:41.7px;top:747.55px;font-size:14.3px;color:#333;font-weight:normal;transform:scaleX(0.9580);transform-origin:0 0;">Name</div>
<div style="left:405px;top:736px;width:1px;height:24px;background:#a8a8a8"></div>
<div class="t" style="left:229.7px;top:747.55px;font-size:14.3px;color:#333;font-weight:normal;transform:scaleX(0.9580);transform-origin:0 0;">Type</div>
<div style="left:518px;top:736px;width:1px;height:24px;background:#a8a8a8"></div>
<div class="t" style="right:1087px;top:747.55px;font-size:14.3px;color:#333;font-weight:normal;transform:scaleX(0.9580);transform-origin:100% 0;">Mark-up</div>
<div style="left:38px;top:761px;width:189px;height:28px;background:#e9e9e9;border:1px solid #dcdcdc;box-sizing:border-box"></div>
<div class="t" style="left:43.2px;top:773.05px;font-size:14.3px;color:#333;font-weight:normal;transform:scaleX(0.9580);transform-origin:0 0;">SC mark-up</div>
<div style="left:226px;top:761px;width:180px;height:28px;background:#e9e9e9;border:1px solid #dcdcdc;box-sizing:border-box"></div>
<div class="t" style="left:231.2px;top:773.05px;font-size:14.3px;color:#333;font-weight:normal;transform:scaleX(0.9580);transform-origin:0 0;">SC</div>
<div style="left:405px;top:761px;width:114px;height:28px;background:#fff;border:1px solid #dcdcdc;box-sizing:border-box"></div>
<div class="t" style="right:1108px;top:773.05px;font-size:14.3px;color:#333;font-weight:normal;transform:scaleX(0.9580);transform-origin:100% 0;">15,00</div>
<div class="t" style="right:1088px;top:773.05px;font-size:14.3px;color:#a8a8a8;font-weight:normal;transform:scaleX(0.9580);transform-origin:100% 0;">%</div>
<div style="left:38px;top:788px;width:189px;height:28px;background:#e9e9e9;border:1px solid #dcdcdc;box-sizing:border-box"></div>
<div class="t" style="left:43.2px;top:800.05px;font-size:14.3px;color:#333;font-weight:normal;transform:scaleX(0.9580);transform-origin:0 0;">SO mark-up</div>
<div style="left:226px;top:788px;width:180px;height:28px;background:#e9e9e9;border:1px solid #dcdcdc;box-sizing:border-box"></div>
<div class="t" style="left:231.2px;top:800.05px;font-size:14.3px;color:#333;font-weight:normal;transform:scaleX(0.9580);transform-origin:0 0;">SO</div>
<div style="left:405px;top:788px;width:114px;height:28px;background:#fff;border:1px solid #dcdcdc;box-sizing:border-box"></div>
<div class="t" style="right:1108px;top:800.05px;font-size:14.3px;color:#333;font-weight:normal;transform:scaleX(0.9580);transform-origin:100% 0;">10,00</div>
<div class="t" style="right:1088px;top:800.05px;font-size:14.3px;color:#a8a8a8;font-weight:normal;transform:scaleX(0.9580);transform-origin:100% 0;">%</div>
<div style="left:38px;top:815px;width:189px;height:29px;background:#e9e9e9;border:1px solid #dcdcdc;box-sizing:border-box"></div>
<div class="t" style="left:43.2px;top:828.05px;font-size:14.3px;color:#333;font-weight:normal;transform:scaleX(0.9580);transform-origin:0 0;">Undantag 1</div>
<div style="left:226px;top:815px;width:180px;height:29px;background:#e9e9e9;border:1px solid #dcdcdc;box-sizing:border-box"></div>
<div class="t" style="left:231.2px;top:828.05px;font-size:14.3px;color:#333;font-weight:normal;transform:scaleX(0.9580);transform-origin:0 0;">Both SO/SC</div>
<div style="left:405px;top:815px;width:114px;height:29px;background:#fff;border:1px solid #dcdcdc;box-sizing:border-box"></div>
<div class="t" style="right:1108px;top:828.05px;font-size:14.3px;color:#333;font-weight:normal;transform:scaleX(0.9580);transform-origin:100% 0;">1,00</div>
<div class="t" style="right:1088px;top:828.05px;font-size:14.3px;color:#a8a8a8;font-weight:normal;transform:scaleX(0.9580);transform-origin:100% 0;">%</div>
<div style="left:38px;top:843px;width:189px;height:28px;background:#e9e9e9;border:1px solid #dcdcdc;box-sizing:border-box"></div>
<div class="t" style="left:43.2px;top:855.05px;font-size:14.3px;color:#333;font-weight:normal;transform:scaleX(0.9580);transform-origin:0 0;">Undantag 2</div>
<div style="left:226px;top:843px;width:180px;height:28px;background:#e9e9e9;border:1px solid #dcdcdc;box-sizing:border-box"></div>
<div class="t" style="left:231.2px;top:855.05px;font-size:14.3px;color:#333;font-weight:normal;transform:scaleX(0.9580);transform-origin:0 0;">Both SO/SC</div>
<div style="left:405px;top:843px;width:114px;height:28px;background:#fff;border:1px solid #dcdcdc;box-sizing:border-box"></div>
<div class="t" style="right:1108px;top:855.05px;font-size:14.3px;color:#333;font-weight:normal;transform:scaleX(0.9580);transform-origin:100% 0;">2,00</div>
<div class="t" style="right:1088px;top:855.05px;font-size:14.3px;color:#a8a8a8;font-weight:normal;transform:scaleX(0.9580);transform-origin:100% 0;">%</div>
<div class="t" style="left:543.2px;top:723.68px;font-size:13.9px;color:#2a2a2a;font-weight:bold;transform:scaleX(1.1000);transform-origin:0 0;">Sales overhead mark-up</div>
<div style="left:544px;top:735px;width:509px;height:137px;background:#fff;border:1px solid #9a9a9a;box-sizing:border-box"></div>
<div style="left:545px;top:736px;width:507px;height:25px;background:linear-gradient(#fefefe,#f4f4f4);border-bottom:1px solid #9a9a9a;box-sizing:border-box"></div>
<div style="left:551px;top:736px;width:1px;height:25px;background:#9a9a9a"></div>
<div style="left:738px;top:736px;width:1px;height:24px;background:#a8a8a8"></div>
<div class="t" style="left:554.7px;top:747.55px;font-size:14.3px;color:#333;font-weight:normal;transform:scaleX(0.9580);transform-origin:0 0;">Name</div>
<div style="left:850px;top:736px;width:1px;height:24px;background:#a8a8a8"></div>
<div class="t" style="right:755px;top:747.55px;font-size:14.3px;color:#333;font-weight:normal;transform:scaleX(0.9580);transform-origin:100% 0;">Mark-up</div>
<div style="left:551px;top:761px;width:188px;height:28px;background:#e9e9e9;border:1px solid #dcdcdc;box-sizing:border-box"></div>
<div class="t" style="left:556.2px;top:773.05px;font-size:14.3px;color:#333;font-weight:normal;transform:scaleX(0.9580);transform-origin:0 0;">General sales OH mark-up</div>
<div style="left:738px;top:761px;width:113px;height:28px;background:#fff;border:1px solid #dcdcdc;box-sizing:border-box"></div>
<div class="t" style="right:776px;top:773.05px;font-size:14.3px;color:#333;font-weight:normal;transform:scaleX(0.9580);transform-origin:100% 0;">30,00</div>
<div class="t" style="right:756px;top:773.05px;font-size:14.3px;color:#a8a8a8;font-weight:normal;transform:scaleX(0.9580);transform-origin:100% 0;">%</div>
<div class="t" style="left:1055.2px;top:723.68px;font-size:13.9px;color:#2a2a2a;font-weight:bold;transform:scaleX(1.1000);transform-origin:0 0;">Profit mark-up</div>
<div style="left:1056px;top:735px;width:510px;height:137px;background:#fff;border:1px solid #9a9a9a;box-sizing:border-box"></div>
<div style="left:1057px;top:736px;width:508px;height:25px;background:linear-gradient(#fefefe,#f4f4f4);border-bottom:1px solid #9a9a9a;box-sizing:border-box"></div>
<div style="left:1063px;top:736px;width:1px;height:25px;background:#9a9a9a"></div>
<div style="left:1251px;top:736px;width:1px;height:24px;background:#a8a8a8"></div>
<div class="t" style="left:1066.7px;top:747.55px;font-size:14.3px;color:#333;font-weight:normal;transform:scaleX(0.9580);transform-origin:0 0;">Name</div>
<div style="left:1363px;top:736px;width:1px;height:24px;background:#a8a8a8"></div>
<div class="t" style="right:242px;top:747.55px;font-size:14.3px;color:#333;font-weight:normal;transform:scaleX(0.9580);transform-origin:100% 0;">Mark-up</div>
<div style="left:1063px;top:761px;width:189px;height:28px;background:#e9e9e9;border:1px solid #dcdcdc;box-sizing:border-box"></div>
<div class="t" style="left:1068.2px;top:773.05px;font-size:14.3px;color:#333;font-weight:normal;transform:scaleX(0.9580);transform-origin:0 0;">General profit mark-up</div>
<div style="left:1251px;top:761px;width:113px;height:28px;background:#fff;border:1px solid #dcdcdc;box-sizing:border-box"></div>
<div class="t" style="right:263px;top:773.05px;font-size:14.3px;color:#333;font-weight:normal;transform:scaleX(0.9580);transform-origin:100% 0;">10,00</div>
<div class="t" style="right:243px;top:773.05px;font-size:14.3px;color:#a8a8a8;font-weight:normal;transform:scaleX(0.9580);transform-origin:100% 0;">%</div>
</body></html>
